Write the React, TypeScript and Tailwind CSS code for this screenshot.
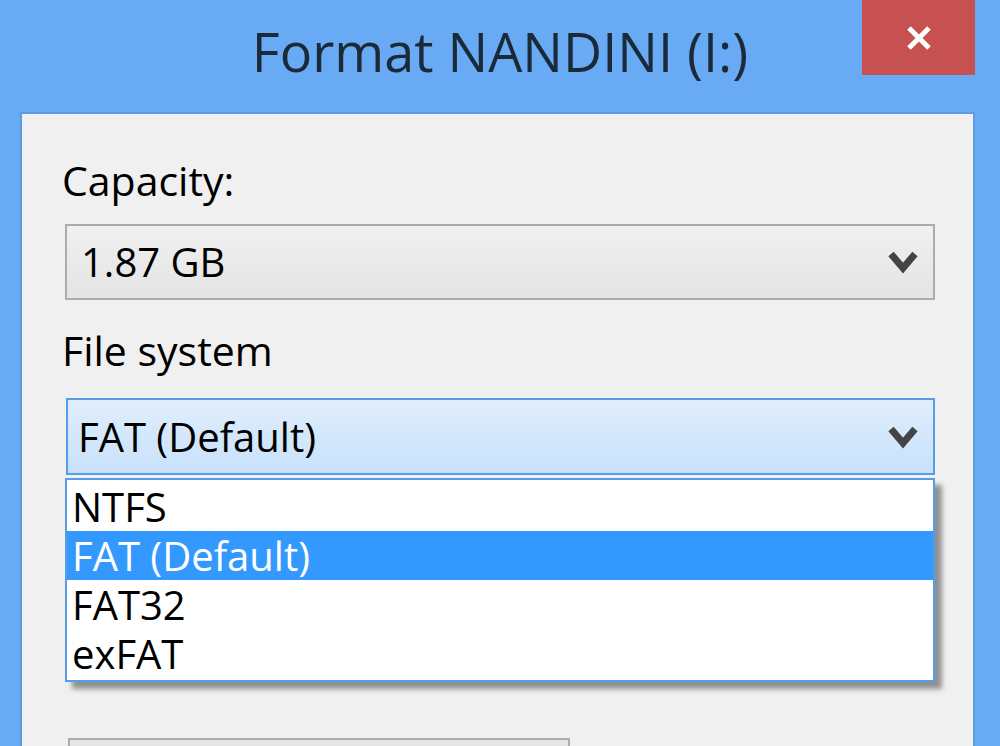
import React from 'react';

const font = { fontFamily: '"Open Sans", "Noto Sans", sans-serif' };

function Chevron() {
  return (
    <svg width="30" height="24" viewBox="0 0 30 24" className="shrink-0">
      <polyline
        points="3,4 15,18 27,4"
        fill="none"
        stroke="#444444"
        strokeWidth="7"
        strokeLinejoin="miter"
      />
    </svg>
  );
}

function Combo({ value, focused }: { value: string; focused?: boolean }) {
  return (
    <div
      className={
        focused
          ? 'flex h-[77px] items-center justify-between border-2 border-[#569de5] bg-gradient-to-b from-[#e0eefc] to-[#c7e1fb] pl-[10px] pr-[15px]'
          : 'flex h-[76px] items-center justify-between border-2 border-[#acacac] bg-gradient-to-b from-[#f0f0f0] to-[#e4e4e4] pl-[14px] pr-[15px]'
      }
    >
      <span className="text-[40px] leading-[52px] text-black">{value}</span>
      <Chevron />
    </div>
  );
}

export default function App() {
  const options = ['NTFS', 'FAT (Default)', 'FAT32', 'exFAT'];

  return (
    <div className="h-[746px] w-[1000px] overflow-hidden bg-[#69aaf4]" style={font}>
      <div className="grid h-[112px] grid-cols-[1fr_auto_1fr]">
        <div />
        <div className="pt-[16px] text-[54px] leading-[70px] text-[#1b2a39]">Format NANDINI (I:)</div>
        <div className="flex justify-end pr-[25px]">
          <div className="flex h-[75px] w-[113px] items-center justify-center bg-[#c75050]">
            <svg width="28" height="28" viewBox="0 0 28 28">
              <path d="M4 4 L24 24 M24 4 L4 24" stroke="#ffffff" strokeWidth="5" />
            </svg>
          </div>
        </div>
      </div>

      <div className="ml-[20px] mr-[25px] h-[700px] border-2 border-[#5d9ce3] bg-[#f0f0f0] pl-[40px] pr-[38px] pt-[40px]">
        <div className="text-[41px] leading-[52px] text-black">Capacity:</div>
        <div className="ml-[3px] mt-[18px]">
          <Combo value="1.87 GB" />
        </div>

        <div className="mt-[24px] text-[41px] leading-[52px] text-black">File system</div>
        <div className="relative ml-[4px] mt-[22px]">
          <Combo value="FAT (Default)" focused />
          <div className="absolute left-[-1px] right-0 top-full mt-[3px] border-2 border-[#569de5] bg-white py-[2px] shadow-[7px_7px_5px_rgba(0,0,0,0.4)]">
            {options.map((o) => (
              <div
                key={o}
                className={
                  o === 'FAT (Default)'
                    ? 'h-[49px] bg-[#3399ff] pl-[5px] text-[40px] leading-[49px] text-white'
                    : 'h-[49px] pl-[5px] text-[40px] leading-[49px] text-black'
                }
              >
                {o}
              </div>
            ))}
          </div>
        </div>

        <div className="ml-[6px] mt-[263px] h-[60px] w-[502px] border-2 border-[#acacac] bg-[#e5e5e5]" />
      </div>
    </div>
  );
}
